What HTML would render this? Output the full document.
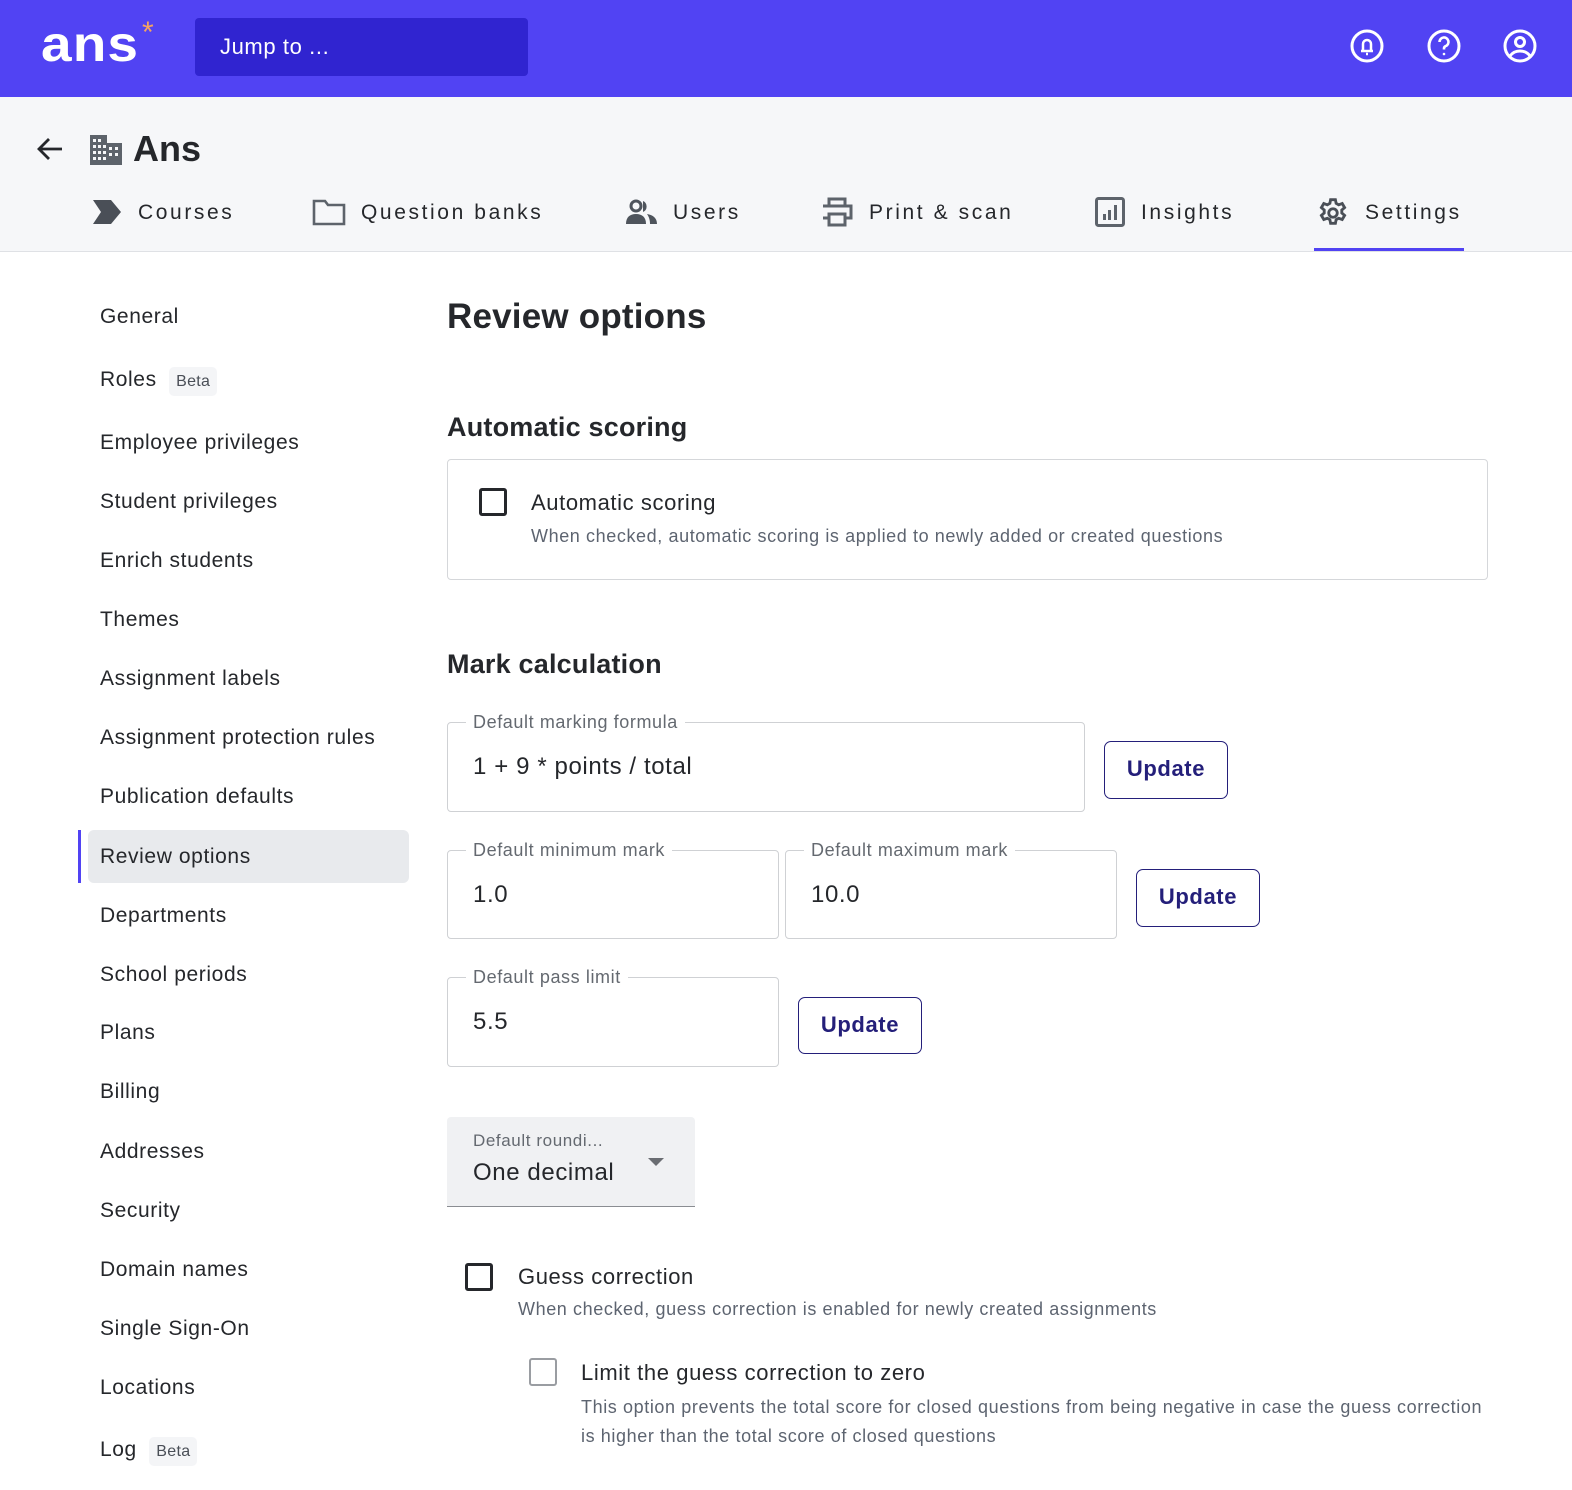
<!DOCTYPE html>
<html><head><meta charset="utf-8"><style>
*{margin:0;padding:0;box-sizing:border-box}
body{width:1572px;height:1490px;position:relative;background:#fff;font-family:"Liberation Sans",sans-serif;color:#25272b;overflow:hidden;letter-spacing:0.6px}
.a{position:absolute;white-space:nowrap}
.top{position:absolute;left:0;top:0;width:1572px;height:97px;background:#5143f3}
.sub{position:absolute;left:0;top:97px;width:1572px;height:155px;background:#f6f7f9;border-bottom:1px solid #dfe1e5}
.nav{font-size:21px;letter-spacing:2.6px;color:#25272b;line-height:24px;top:201px}
.side{font-size:21px;line-height:24px;left:100px;color:#25272b}
.beta{font-size:16px;color:#4a4f57;background:#f4f5f7;border-radius:5px;padding:6px 7px;line-height:18px;letter-spacing:0.3px}
.fs{position:absolute;border:1px solid #cfd1d4;border-radius:4px}
.lg{position:absolute;top:-12px;left:18px;background:#fff;padding:0 7px;font-size:18px;color:#646970;line-height:22px;white-space:nowrap}
.val{position:absolute;left:25px;font-size:24px;color:#25272b;line-height:28px}
.btn{position:absolute;border:1.5px solid #241f7a;border-radius:7px;color:#241f7a;font-size:22px;font-weight:bold;text-align:center;line-height:54px;background:#fff}
.cb{position:absolute;border:3px solid #25272b;border-radius:3px}
.desc{font-size:18px;color:#5d6470;line-height:22px}
</style></head><body>
<div class="top"></div>
<div class="a" style="left:41px;top:14px;font-size:50px;font-weight:bold;color:#fff;letter-spacing:1px;line-height:60px;transform:scaleX(1.1);transform-origin:left">ans</div>
<div class="a" style="left:142px;top:18px;font-size:30px;color:#f4a361;line-height:30px">*</div>
<div class="a" style="left:195px;top:18px;width:333px;height:58px;background:#3024d0;border-radius:4px"></div>
<div class="a" style="left:220px;top:34px;font-size:22px;color:#fff;line-height:26px">Jump to ...</div>
<svg class="a" style="left:1350px;top:29px" width="34" height="34" viewBox="0 0 34 34" fill="none" stroke="#fff" stroke-width="3"><circle cx="17" cy="17" r="15"/><path d="M11 22h12M13 21v-6a4 4 0 0 1 8 0v6M16 25h2" stroke-width="2.5"/></svg>
<svg class="a" style="left:1427px;top:29px" width="34" height="34" viewBox="0 0 34 34" fill="none" stroke="#fff" stroke-width="3"><circle cx="17" cy="17" r="15"/><path d="M12.5 13a4.5 4.5 0 1 1 6 4.2c-1 .5-1.5 1.2-1.5 2.3v1" stroke-width="2.6"/><circle cx="17" cy="25" r="1.3" fill="#fff" stroke="none"/></svg>
<svg class="a" style="left:1503px;top:29px" width="34" height="34" viewBox="0 0 34 34" fill="none" stroke="#fff" stroke-width="3"><circle cx="17" cy="17" r="15"/><circle cx="17" cy="13" r="4.5"/><path d="M7 27c3-4 6-5 10-5s7 1 10 5"/></svg>
<div class="sub"></div>
<svg class="a" style="left:35px;top:134px" width="30" height="30" viewBox="0 0 30 30" fill="none" stroke="#25272b" stroke-width="2.8"><path d="M27 15H4M14 5L4 15l10 10"/></svg>
<svg class="a" style="left:89px;top:133px" width="34" height="32" viewBox="0 0 34 32"><path fill="#5d636b" d="M1 2h17v8h15v22H1z"/><g fill="#f6f7f9"><rect x="4" y="6" width="3" height="3"/><rect x="9" y="6" width="3" height="3"/><rect x="4" y="12" width="3" height="3"/><rect x="9" y="12" width="3" height="3"/><rect x="14" y="12" width="3" height="3"/><rect x="4" y="18" width="3" height="3"/><rect x="9" y="18" width="3" height="3"/><rect x="14" y="18" width="3" height="3"/><rect x="20" y="14" width="3" height="3"/><rect x="26" y="14" width="3" height="3"/><rect x="20" y="20" width="3" height="3"/><rect x="26" y="20" width="3" height="3"/><rect x="4" y="24" width="3" height="3"/><rect x="9" y="24" width="3" height="3"/><rect x="14" y="24" width="3" height="3"/></g></svg>
<div class="a" style="left:133px;top:128px;font-size:36px;font-weight:bold;line-height:42px;letter-spacing:0">Ans</div>
<svg class="a" style="left:92px;top:200px" width="30" height="24"><path d="M1 0h18l10 12-10 12H1l8-12z" fill="#4a4f57"/></svg>
<div class="a nav" style="left:138px">Courses</div>
<svg class="a" style="left:312px;top:198px" width="34" height="28" fill="none" stroke="#5d636b" stroke-width="2.6"><path d="M2 3h11l3 4h16v19H2z"/></svg>
<div class="a nav" style="left:361px">Question banks</div>
<svg class="a" style="left:625px;top:199px" width="34" height="26" fill="#4e545c"><circle cx="11" cy="7" r="5" fill="none" stroke="#4e545c" stroke-width="3"/><path d="M1 25c0-7 4-10 10-10s10 3 10 10z"/><path d="M18 2a6 6 0 0 1 0 11zM22 15c6 1 10 4 10 10h-7c0-4-1-7-3-10z"/></svg>
<div class="a nav" style="left:673px">Users</div>
<svg class="a" style="left:820px;top:196px" width="34" height="32" fill="none" stroke="#5d636b" stroke-width="3"><path d="M9 10V3h16v7M3 10h28v12h-6M9 22H3zM9 18h16v11H9z"/></svg>
<div class="a nav" style="left:869px">Print &amp; scan</div>
<svg class="a" style="left:1095px;top:197px" width="30" height="30"><rect x="1.5" y="1.5" width="27" height="27" rx="2" fill="none" stroke="#5d636b" stroke-width="3"/><g fill="#5d636b"><rect x="8" y="17" width="3" height="6"/><rect x="13" y="13" width="3" height="10"/><rect x="19" y="8" width="3" height="15"/></g></svg>
<div class="a nav" style="left:1141px">Insights</div>
<svg class="a" style="left:1316px;top:196px" width="34" height="34" viewBox="0 0 24 24" fill="none" stroke="#4a4f57" stroke-width="2"><path d="M10.3 2.6h3.4l.5 2.6 1.8 1 2.5-.9 1.7 2.9-2 1.7v2.1l2 1.7-1.7 2.9-2.5-.9-1.8 1-.5 2.6h-3.4l-.5-2.6-1.8-1-2.5.9-1.7-2.9 2-1.7v-2.1l-2-1.7 1.7-2.9 2.5.9 1.8-1z"/><circle cx="12" cy="12" r="3"/></svg>
<div class="a nav" style="left:1365px">Settings</div>
<div class="a" style="left:1314px;top:248px;width:150px;height:3px;background:#5143f3"></div>

<div class="a" style="left:88px;top:830px;width:321px;height:53px;background:#e8eaed;border-radius:6px"></div>
<div class="a" style="left:78px;top:830px;width:3px;height:53px;background:#5143f3"></div>
<div class="a side" style="top:305px">General</div>
<div class="a side" style="top:368px">Roles <span class="beta" style="margin-left:6px">Beta</span></div>
<div class="a side" style="top:431px">Employee privileges</div>
<div class="a side" style="top:490px">Student privileges</div>
<div class="a side" style="top:549px">Enrich students</div>
<div class="a side" style="top:608px">Themes</div>
<div class="a side" style="top:667px">Assignment labels</div>
<div class="a side" style="top:726px">Assignment protection rules</div>
<div class="a side" style="top:785px">Publication defaults</div>
<div class="a side" style="top:845px">Review options</div>
<div class="a side" style="top:904px">Departments</div>
<div class="a side" style="top:963px">School periods</div>
<div class="a side" style="top:1021px">Plans</div>
<div class="a side" style="top:1080px">Billing</div>
<div class="a side" style="top:1140px">Addresses</div>
<div class="a side" style="top:1199px">Security</div>
<div class="a side" style="top:1258px">Domain names</div>
<div class="a side" style="top:1317px">Single Sign-On</div>
<div class="a side" style="top:1376px">Locations</div>
<div class="a side" style="top:1438px">Log <span class="beta" style="margin-left:6px">Beta</span></div>

<div class="a" style="left:447px;top:296px;font-size:35px;font-weight:bold;line-height:42px;letter-spacing:0.2px">Review options</div>
<div class="a" style="left:447px;top:411px;font-size:27px;font-weight:bold;line-height:32px;letter-spacing:0.2px">Automatic scoring</div>
<div class="a" style="left:447px;top:459px;width:1041px;height:121px;border:1px solid #d5d7da;border-radius:4px"></div>
<div class="cb" style="left:479px;top:488px;width:28px;height:28px"></div>
<div class="a" style="left:531px;top:490px;font-size:22px;line-height:26px">Automatic scoring</div>
<div class="a desc" style="left:531px;top:525px">When checked, automatic scoring is applied to newly added or created questions</div>
<div class="a" style="left:447px;top:648px;font-size:27px;font-weight:bold;line-height:32px;letter-spacing:0.2px">Mark calculation</div>

<div class="fs" style="left:447px;top:722px;width:638px;height:90px"><div class="lg">Default marking formula</div><div class="val" style="top:30px">1 + 9 * points / total</div></div>
<div class="btn" style="left:1104px;top:741px;width:124px;height:58px">Update</div>
<div class="fs" style="left:447px;top:850px;width:332px;height:89px"><div class="lg">Default minimum mark</div><div class="val" style="top:30px">1.0</div></div>
<div class="fs" style="left:785px;top:850px;width:332px;height:89px"><div class="lg">Default maximum mark</div><div class="val" style="top:30px">10.0</div></div>
<div class="btn" style="left:1136px;top:869px;width:124px;height:58px">Update</div>
<div class="fs" style="left:447px;top:977px;width:332px;height:90px"><div class="lg">Default pass limit</div><div class="val" style="top:30px">5.5</div></div>
<div class="btn" style="left:798px;top:997px;width:124px;height:57px">Update</div>

<div class="a" style="left:447px;top:1117px;width:248px;height:90px;background:#f0f1f3;border-radius:4px 4px 0 0;border-bottom:1.5px solid #8a8d92"></div>
<div class="a" style="left:473px;top:1131px;font-size:17px;color:#646970;line-height:20px">Default roundi...</div>
<div class="a" style="left:473px;top:1159px;font-size:24px;line-height:28px">One decimal</div>
<div class="a" style="left:648px;top:1158px;width:0;height:0;border-left:8px solid transparent;border-right:8px solid transparent;border-top:8px solid #6a6d72"></div>

<div class="cb" style="left:465px;top:1263px;width:28px;height:28px"></div>
<div class="a" style="left:518px;top:1264px;font-size:22px;line-height:26px">Guess correction</div>
<div class="a desc" style="left:518px;top:1298px">When checked, guess correction is enabled for newly created assignments</div>
<div class="cb" style="left:529px;top:1358px;width:28px;height:28px;border-color:#9a9da2;border-width:2.5px"></div>
<div class="a" style="left:581px;top:1360px;font-size:22px;line-height:26px">Limit the guess correction to zero</div>
<div class="a desc" style="left:581px;top:1393px;line-height:29px;white-space:normal;width:905px">This option prevents the total score for closed questions from being negative in case the guess correction is higher than the total score of closed questions</div>
</body></html>
